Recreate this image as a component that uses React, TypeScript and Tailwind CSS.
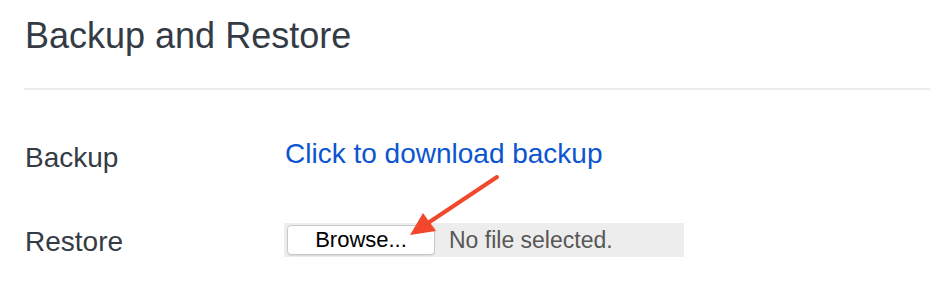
export default function App(): JSX.Element {
  return (
    <div
      className="relative w-[930px] h-[286px] overflow-hidden bg-white"
      style={{ fontFamily: '"Liberation Sans", Arial, sans-serif' }}
    >
      <div className="pl-[24px] pt-[14px]">
        <h1 className="pl-[1px] text-[36px] leading-[43px] text-[#343b45] font-normal">
          Backup and Restore
        </h1>
        <div className="mt-[31px] h-[2px] bg-[#ececec]" />

        <div className="mt-[48px] grid grid-cols-[260px_1fr] pl-[1px]">
          <div className="pt-[4px] text-[28px] leading-[32px] text-[#343b45]">Backup</div>
          <a
            href="#"
            className="text-[28px] leading-[32px] text-[#0b55d0] no-underline"
          >
            Click to download backup
          </a>
        </div>

        <div className="mt-[49px] grid grid-cols-[259px_1fr] pl-[1px]">
          <div className="pt-[3px] text-[28px] leading-[32px] text-[#343b45]">Restore</div>
          <FileInput />
        </div>
      </div>

      <Arrow />
    </div>
  );
}

function FileInput(): JSX.Element {
  return (
    <div className="flex items-center w-[400px] h-[34px] bg-[#ededed] pl-[3px]">
      <button className="w-[148px] h-[30px] bg-white border border-[#c9c9c9] rounded-[4px] shadow-[0_1px_1px_rgba(0,0,0,0.08)] text-[22px] leading-[28px] text-black">
        Browse...
      </button>
      <span className="ml-[14px] text-[23px] leading-[28px] text-[#575757]">
        No file selected.
      </span>
    </div>
  );
}

function Arrow(): JSX.Element {
  return (
    <svg
      className="absolute left-0 top-0 pointer-events-none"
      width="930"
      height="286"
      viewBox="0 0 930 286"
    >
      <line
        x1="497"
        y1="177"
        x2="428"
        y2="223"
        stroke="#f2472a"
        strokeWidth="4"
        strokeLinecap="round"
      />
      <polygon points="410,235 423,213 436,231" fill="#f2472a" />
    </svg>
  );
}
